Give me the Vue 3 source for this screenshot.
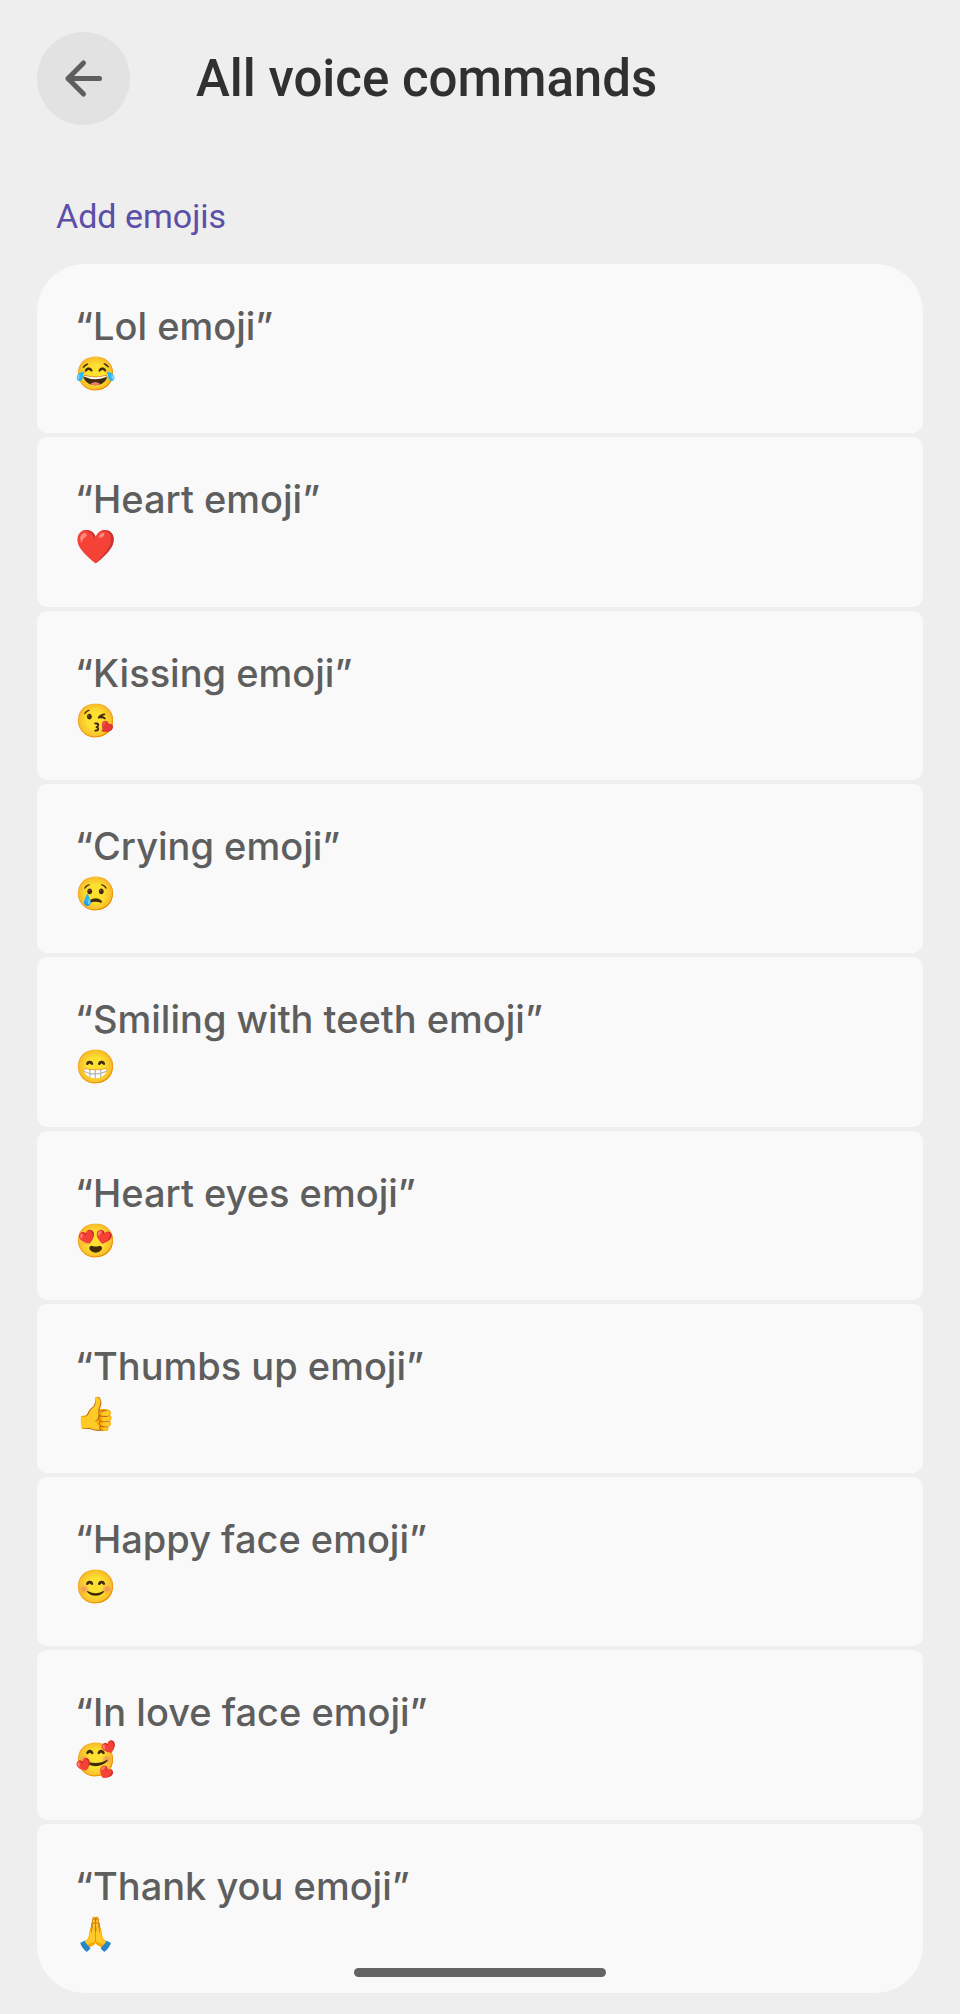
<script setup>
const commands = [
  { name: 'Lol emoji', emoji: '😂' },
  { name: 'Heart emoji', emoji: '❤️' },
  { name: 'Kissing emoji', emoji: '😘' },
  { name: 'Crying emoji', emoji: '😢' },
  { name: 'Smiling with teeth emoji', emoji: '😁' },
  { name: 'Heart eyes emoji', emoji: '😍' },
  { name: 'Thumbs up emoji', emoji: '👍' },
  { name: 'Happy face emoji', emoji: '😊' },
  { name: 'In love face emoji', emoji: '🥰' },
  { name: 'Thank you emoji', emoji: '🙏' }
]
</script>

<template>
  <div class="page">
    <header class="top-bar">
      <button class="back" type="button" aria-label="Back">
        <svg viewBox="0 0 40 40" width="40" height="40" aria-hidden="true">
          <path d="M19.5 4 L4 19.5 L19.5 35 M4 19.5 H35.5" />
        </svg>
      </button>
      <h1>All voice commands</h1>
    </header>

    <main class="section">
      <h2>Add emojis</h2>
      <ul class="list">
        <li v-for="item in commands" :key="item.name" class="card">
          <p class="phrase">“{{ item.name }}”</p>
          <p class="emoji">{{ item.emoji }}</p>
        </li>
      </ul>
    </main>

    <div class="home-bar"></div>
  </div>
</template>

<style>
body {
  margin: 0;
  background: #eeeeee;
}
</style>

<style scoped>
.page {
  display: flex;
  flex-direction: column;
  box-sizing: border-box;
  min-height: 100vh;
  padding: 32px 37px 21px;
  font-family: Inter, Roboto, sans-serif;
  color: #5e5e5e;
}

h1,
h2,
p {
  margin: 0;
  font-weight: 500;
}

h1,
h2 {
  font-family: Roboto, sans-serif;
}

.top-bar {
  display: flex;
  align-items: center;
  gap: 66px;
}

.back {
  display: flex;
  align-items: center;
  justify-content: center;
  width: 93px;
  height: 93px;
  padding: 0;
  border: none;
  border-radius: 50%;
  background: #e2e2e2;
  cursor: pointer;
}

.back path {
  fill: none;
  stroke: #5e5e5e;
  stroke-width: 5;
  stroke-linecap: round;
  stroke-linejoin: round;
}

h1 {
  font-size: 51px;
  line-height: 64px;
  color: #303030;
}

.section {
  display: flex;
  flex: 1;
  flex-direction: column;
  padding-top: 67px;
}

h2 {
  padding: 0 19px 24px;
  font-size: 34px;
  font-weight: 400;
  line-height: 48px;
  color: #5b4fa8;
}

.list {
  display: grid;
  flex: 1;
  grid-auto-rows: 1fr;
  gap: 4px;
  margin: 0;
  padding: 0;
  list-style: none;
}

.card {
  padding: 38px 38px 24px;
  border-radius: 10px;
  background: #f9f9f9;
}

.card:first-child {
  border-top-left-radius: 48px;
  border-top-right-radius: 48px;
}

.card:last-child {
  border-bottom-left-radius: 48px;
  border-bottom-right-radius: 48px;
}

.phrase {
  font-size: 38px;
  line-height: 48px;
}

.emoji {
  font-size: 33px;
  line-height: 46px;
}

/* system gesture handle, floats over the list */
.home-bar {
  position: fixed;
  bottom: 37px;
  left: 50%;
  width: 252px;
  height: 9px;
  margin-left: -126px;
  border-radius: 5px;
  background: #646464;
}
</style>
